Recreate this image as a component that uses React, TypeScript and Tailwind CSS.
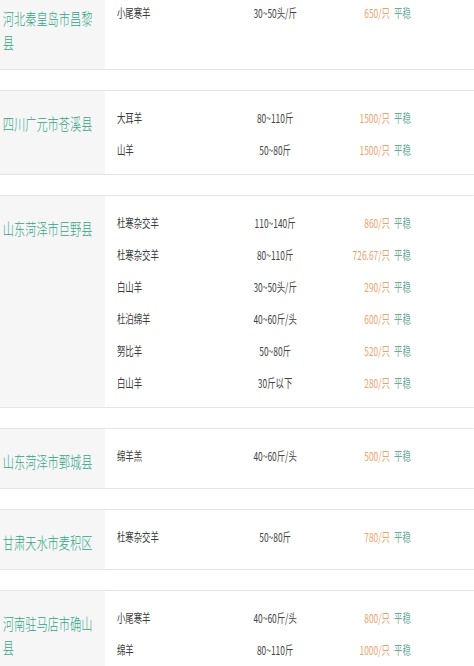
import React from "react";

type Row = [string, string, string];
const data: { region: string; rows: Row[] }[] = [
  { region: "河北秦皇岛市昌黎县", rows: [["小尾寒羊", "30~50头/斤", "650/只"]] },
  {
    region: "四川广元市苍溪县",
    rows: [
      ["大耳羊", "80~110斤", "1500/只"],
      ["山羊", "50~80斤", "1500/只"],
    ],
  },
  {
    region: "山东菏泽市巨野县",
    rows: [
      ["杜寒杂交羊", "110~140斤", "860/只"],
      ["杜寒杂交羊", "80~110斤", "726.67/只"],
      ["白山羊", "30~50头/斤", "290/只"],
      ["杜泊绵羊", "40~60斤/头", "600/只"],
      ["努比羊", "50~80斤", "520/只"],
      ["白山羊", "30斤以下", "280/只"],
    ],
  },
  { region: "山东菏泽市鄄城县", rows: [["绵羊羔", "40~60斤/头", "500/只"]] },
  { region: "甘肃天水市麦积区", rows: [["杜寒杂交羊", "50~80斤", "780/只"]] },
  {
    region: "河南驻马店市确山县",
    rows: [
      ["小尾寒羊", "40~60斤/头", "800/只"],
      ["绵羊", "80~110斤", "1000/只"],
    ],
  },
];

export default function App() {
  return (
    <div
      className="w-[474px] h-[666px] overflow-hidden bg-white"
      style={{ fontFamily: '"Noto Sans CJK SC", "Noto Sans", sans-serif' }}
    >
      <div className="w-[677px] origin-top-left scale-x-[0.7] -mt-[15px] flex flex-col gap-[20px]">
        {data.map((sec, i) => (
          <div key={i} className="flex border-y border-[#e4e4e4]">
            <div className="w-[150px] shrink-0 bg-[#f6f6f6] pl-[4px] pr-[8px] pt-[20px] pb-[15px] text-[16px] leading-[24px] font-light text-[#2fa585]">
              {sec.region}
            </div>
            <div className="flex-1 pt-[11px] pb-[8px]">
              {sec.rows.map((r, j) => (
                <div key={j} className="flex h-[32px] items-center text-[12px] leading-[16px]">
                  <div className="w-[167px] pl-[17px] text-[#3a3a3a]">{r[0]}</div>
                  <div className="w-[152px] text-center text-[#444444]">{r[1]}</div>
                  <div className="w-[88px] text-right text-[#eba36c]">{r[2]}</div>
                  <div className="ml-[6px] text-[#67a898]">平稳</div>
                </div>
              ))}
            </div>
          </div>
        ))}
      </div>
    </div>
  );
}
